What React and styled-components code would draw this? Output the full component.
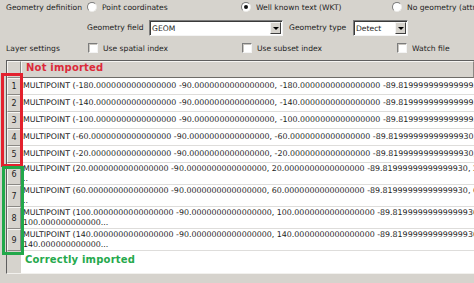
import React from "react";
import styled, { createGlobalStyle } from "styled-components";

const ZEROS = "0000000000000000";
const LAT = "-89.81999999999999930";

const rows = [-180, -140, -100, -60, -20, 20, 60, 100, 140].map((x, i) => {
  const v = `${x}.${ZEROS}`;
  return {
    id: i + 1,
    line: `MULTIPOINT (${v} -90.${ZEROS}, ${v} ${LAT}, ${v} -89.63999999999999860, ${v} -89.4599`,
    more: i === 5 || i === 6 ? ".." : i > 6 ? `${x}.000000000000...` : null,
  };
});

export default function App() {
  return (
    <Window>
      <GlobalStyle />
      <Settings>
        <GroupLabel>Geometry definition</GroupLabel>
        <Option>
          <Radio />
          Point coordinates
        </Option>
        <Option>
          <Radio $checked />
          Well known text (WKT)
        </Option>
        <Option>
          <Radio />
          No geometry (attribute only table)
        </Option>

        <FieldRow>
          <FieldLabel $w={62}>Geometry field</FieldLabel>
          <Combo $w={134}>
            <ComboText>GEOM</ComboText>
            <ComboButton>
              <Arrow />
            </ComboButton>
          </Combo>
          <FieldLabel $w={64} $ml={6}>Geometry type</FieldLabel>
          <Combo $w={55}>
            <ComboText>Detect</ComboText>
            <ComboButton>
              <Arrow />
            </ComboButton>
          </Combo>
        </FieldRow>

        <GroupLabel>Layer settings</GroupLabel>
        <Option $shift={1}>
          <Check />
          Use spatial index
        </Option>
        <Option $shift={1}>
          <Check />
          Use subset index
        </Option>
        <Option $shift={5}>
          <Check />
          Watch file
        </Option>
      </Settings>

      <Table>
        <Corner />
        <HeadCell />
        {rows.map((r) => (
          <React.Fragment key={r.id}>
            <RowHead>{r.id}</RowHead>
            <Cell $tall={!!r.more}>
              <span>{r.line}</span>
              {r.more && <span>{r.more}</span>}
            </Cell>
          </React.Fragment>
        ))}
        <RowHead $blank />
        <Filler />
      </Table>

      <Mark $color="#e3212e" $top={73} $left={1} $h={94} />
      <Mark $color="#22a84a" $top={166} $left={2} $h={89} />
      <Note $color="#dc2a3a" $top={62} $left={26}>Not imported</Note>
      <Note $color="#25a94c" $top={254} $left={25}>Correctly imported</Note>
    </Window>
  );
}

const GlobalStyle = createGlobalStyle`
  html, body {
    margin: 0;
    padding: 0;
    background: #d6d3cd;
  }
  body {
    font-family: "DejaVu Sans", Verdana, sans-serif;
    font-size: 7.6px;
    color: #1e1e1e;
  }
`;

const Window = styled.div`
  position: relative;
  width: 474px;
  height: 283px;
  overflow: hidden;
  background: #d6d3cd;
`;

const Settings = styled.div`
  display: grid;
  grid-template-columns: 81px 154px 151px 1fr;
  grid-template-rows: 14px 17px 14px;
  row-gap: 5px;
  align-items: center;
  padding: 0 0 5px 6px;
`;

const GroupLabel = styled.span`
  white-space: nowrap;
`;

const Option = styled.label`
  display: flex;
  align-items: center;
  gap: 5px;
  white-space: nowrap;
  margin-left: ${(p) => p.$shift || 0}px;
`;

const Radio = styled.span`
  position: relative;
  flex: none;
  width: 10px;
  height: 10px;
  box-sizing: border-box;
  border-radius: 50%;
  background: #fff;
  border: 1px solid;
  border-color: #7c7c7c #ecebe8 #ecebe8 #7c7c7c;

  &::after {
    content: "";
    display: ${(p) => (p.$checked ? "block" : "none")};
    position: absolute;
    left: 2px;
    top: 2px;
    width: 4px;
    height: 4px;
    border-radius: 50%;
    background: #111;
  }
`;

const Check = styled.span`
  flex: none;
  width: 10px;
  height: 10px;
  box-sizing: border-box;
  background: #fff;
  border: 1px solid;
  border-color: #7c7c7c #f4f4f4 #f4f4f4 #7c7c7c;
  box-shadow: inset 1px 1px 0 #c8c5bf;
`;

const FieldRow = styled.div`
  grid-column: 2 / -1;
  display: flex;
  align-items: center;
  height: 17px;
`;

const FieldLabel = styled.span`
  width: ${(p) => p.$w}px;
  margin-left: ${(p) => p.$ml || 0}px;
  white-space: nowrap;
`;

const Combo = styled.div`
  display: flex;
  align-items: center;
  width: ${(p) => p.$w}px;
  height: 16px;
  box-sizing: border-box;
  padding-left: 2px;
  background: #fff;
  border: 1px solid;
  border-color: #7c7c7c #f4f4f4 #f4f4f4 #7c7c7c;
  box-shadow: inset 1px 1px 0 #3a3a3a;
`;

const ComboText = styled.span`
  flex: 1;
  padding-top: 1px;
`;

const ComboButton = styled.span`
  display: flex;
  align-items: center;
  justify-content: center;
  width: 11px;
  height: 12px;
  margin: 1px 1px 0 0;
  box-sizing: border-box;
  background: #d6d3cd;
  border: 1px solid;
  border-color: #f4f4f4 #404040 #404040 #f4f4f4;
`;

const Arrow = styled.span`
  width: 0;
  height: 0;
  border-left: 3px solid transparent;
  border-right: 3px solid transparent;
  border-top: 3px solid #000;
`;

const Table = styled.div`
  display: grid;
  grid-template-columns: 14px 1fr;
  grid-template-rows: 17px repeat(5, 17px) repeat(4, 22px) 1fr;
  width: 468px;
  height: 214px;
  margin-left: 6px;
  box-sizing: border-box;
  background: #fff;
  border-top: 1px solid #5e5e5e;
  border-left: 1px solid #5e5e5e;
  border-bottom: 1px solid #f2f1ee;
  overflow: hidden;
`;

const Raised = styled.div`
  box-sizing: border-box;
  background: #d6d3cd;
  border: 1px solid;
  border-color: #f6f5f2 #8a8884 #8a8884 #f6f5f2;
`;

const Corner = styled(Raised)``;

const HeadCell = styled(Raised)`
  border-bottom-color: #6e6c68;
`;

const RowHead = styled(Raised)`
  display: flex;
  align-items: center;
  justify-content: center;
  font-size: 8px;
  ${(p) => p.$blank && "border-color: #d6d3cd;"}
`;

const Cell = styled.div`
  display: flex;
  flex-direction: column;
  justify-content: ${(p) => (p.$tall ? "flex-start" : "center")};
  padding: ${(p) => (p.$tall ? "1px" : "0")} 0 0 2px;
  font-size: 7.9px;
  line-height: 10px;
  white-space: nowrap;
  overflow: hidden;
  border-bottom: 1px solid #dedddb;
  box-sizing: border-box;
`;

const Filler = styled.div`
  background: #fff;
`;

const Mark = styled.div`
  position: absolute;
  top: ${(p) => p.$top}px;
  left: ${(p) => p.$left}px;
  width: 22px;
  height: ${(p) => p.$h}px;
  box-sizing: border-box;
  border: 3px solid ${(p) => p.$color};
`;

const Note = styled.div`
  position: absolute;
  top: ${(p) => p.$top}px;
  left: ${(p) => p.$left}px;
  font-size: 10px;
  font-weight: bold;
  letter-spacing: 0.2px;
  color: ${(p) => p.$color};
`;
